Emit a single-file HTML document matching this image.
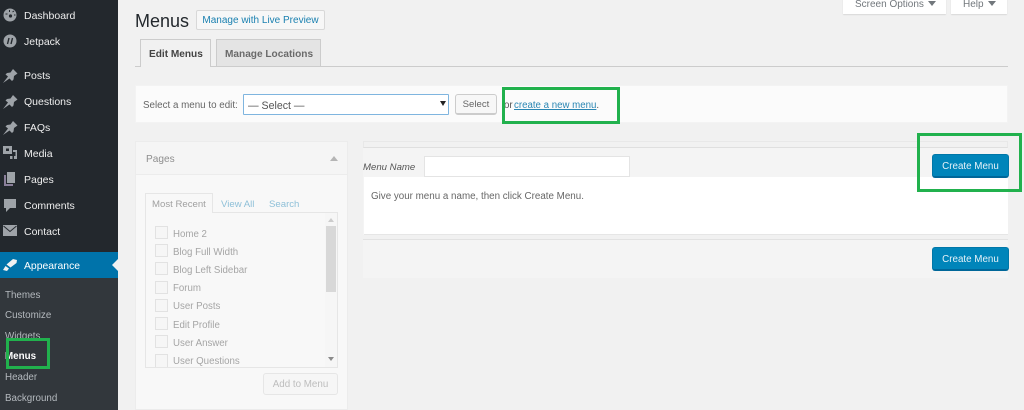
<!DOCTYPE html>
<html><head><meta charset="utf-8">
<style>
html,body{margin:0;padding:0;width:1024px;height:410px;overflow:hidden;background:#f1f1f1}
body{font-family:"Liberation Sans",sans-serif;font-size:10px;color:#555}
#w{position:absolute;left:0;top:0;width:1024px;height:410px;overflow:hidden;filter:blur(.35px)}
.a{position:absolute;box-sizing:border-box}
.t{position:absolute;white-space:nowrap;line-height:14px;margin-top:1px}
.m{color:#eee;font-size:10.500px;left:24px}
.s{color:#b4b9be;font-size:9.800px;left:5px}
.g{position:absolute;box-sizing:border-box;border:3px solid #21b14d}
.btn{position:absolute;box-sizing:border-box;background:#0085ba;border:1px solid #0077a8;border-bottom:2px solid #006799;border-radius:3px;color:#e6f2f8;font-size:9.800px;text-align:center;line-height:24px}
.cb{position:absolute;left:155px;width:13px;height:13px;border:1px solid #e2e2e2;background:#f6f6f6;box-sizing:border-box}
.pl{position:absolute;left:173px;color:#a5a5a5;font-size:9.700px;line-height:14px;white-space:nowrap;margin-top:2px}
svg{position:absolute}
</style></head><body><div id="w">
<div class="a" style="left:0;top:0;width:118px;height:410px;background:#23282d"></div>
<div class="a" style="left:0;top:252px;width:118px;height:26px;background:#0073aa"></div>
<div class="a" style="left:0;top:278px;width:118px;height:132px;background:#32373c"></div>
<svg style="left:112px;top:259px" width="6" height="12"><path d="M6 0L0 6L6 12Z" fill="#f1f1f1"/></svg>

<svg style="left:3px;top:8px" width="14" height="14"><circle cx="7" cy="7" r="6.500" fill="#9ea3a8"/><circle cx="7.500" cy="8" r="1.600" fill="#23282d"/><path d="M2.500 6h2M9.500 4l1.500-1M6.500 2v2M11 7h1.500" stroke="#23282d"/></svg>
<svg style="left:3px;top:34px" width="14" height="14"><circle cx="7" cy="7" r="6.500" fill="#9ea3a8"/><path d="M6 4L4.500 10M9.500 4L8 10" stroke="#23282d" stroke-width="1.400"/></svg>
<svg style="left:3px;top:68px" width="15" height="15"><path d="M0 15L5 8.500L2.500 6.500L4 5L7.500 4.500L10 1L14.500 5.500L11 8L10.500 11.500L9 13L6.500 10.500Z" fill="#9ea3a8"/></svg>
<svg style="left:3px;top:94px" width="15" height="15"><path d="M0 15L5 8.500L2.500 6.500L4 5L7.500 4.500L10 1L14.500 5.500L11 8L10.500 11.500L9 13L6.500 10.500Z" fill="#9ea3a8"/></svg>
<svg style="left:3px;top:120px" width="15" height="15"><path d="M0 15L5 8.500L2.500 6.500L4 5L7.500 4.500L10 1L14.500 5.500L11 8L10.500 11.500L9 13L6.500 10.500Z" fill="#9ea3a8"/></svg>
<svg style="left:3px;top:146px" width="14" height="14"><path d="M0 0H9V8H0ZM3 2.500V5H6V2.500Z" fill-rule="evenodd" fill="#9ea3a8"/><path d="M10 4H14V13H11V10H12.500V6H10ZM7 10H9.500V13H7Z" fill="#9ea3a8"/></svg>
<svg style="left:4px;top:172px" width="12" height="14"><path d="M0 3H2V12H9V14H0Z" fill="#8a7f9a"/><path d="M3 0H11V11H3Z" fill="#9ea3a8"/></svg>
<svg style="left:3px;top:199px" width="14" height="14"><path d="M1 0H13V9H7L3 13V9H1Z" fill="#9ea3a8"/></svg>
<svg style="left:3px;top:225px" width="14" height="12"><path d="M0 0H14V11H0Z" fill="#9ea3a8"/><path d="M0.500 1L7 6.500L13.500 1" stroke="#23282d" fill="none"/></svg>
<svg style="left:3px;top:258px" width="14" height="14"><path d="M0 12L2.500 8L6 10.500L4 13ZM3.500 6.500L10 1L14 2L13.500 5L7.500 9.500Z" fill="#f1f1f1"/></svg>

<div class="t m" style="top:8px">Dashboard</div>
<div class="t m" style="top:34px">Jetpack</div>
<div class="t m" style="top:68px">Posts</div>
<div class="t m" style="top:94px">Questions</div>
<div class="t m" style="top:120px">FAQs</div>
<div class="t m" style="top:146px">Media</div>
<div class="t m" style="top:172px">Pages</div>
<div class="t m" style="top:198px">Comments</div>
<div class="t m" style="top:224px">Contact</div>
<div class="t m" style="top:259px;color:#fff;font-size:10.400px">Appearance</div>
<div class="t s" style="top:288px">Themes</div>
<div class="t s" style="top:308px">Customize</div>
<div class="t s" style="top:329px">Widgets</div>
<div class="t s" style="top:349px;color:#fff;font-weight:bold">Menus</div>
<div class="t s" style="top:370px">Header</div>
<div class="t s" style="top:391px">Background</div>
<div class="g" style="left:6px;top:338px;width:44px;height:31px"></div>

<!-- Top tabs -->
<div class="a" style="left:843px;top:-5px;width:103px;height:19px;background:#fff;box-shadow:0 1px 1px rgba(0,0,0,.1)"></div>
<div class="a" style="left:951px;top:-5px;width:56px;height:19px;background:#fff;box-shadow:0 1px 1px rgba(0,0,0,.1)"></div>
<div class="t" style="left:855px;top:-3px;font-size:10px;color:#72777c">Screen Options</div>
<div class="t" style="left:963px;top:-3px;font-size:10px;color:#72777c">Help</div>
<svg style="left:928px;top:1px" width="8" height="5"><path d="M0 0H8L4 5Z" fill="#72777c"/></svg>
<svg style="left:988px;top:1px" width="8" height="5"><path d="M0 0H8L4 5Z" fill="#72777c"/></svg>

<!-- Title -->
<div class="t" style="left:135px;top:8px;font-size:18px;line-height:24px;color:#23282d">Menus</div>
<div class="a" style="left:196px;top:10px;width:129px;height:20px;background:#f7f7f7;border:1px solid #d8d8d8;border-radius:2px;color:#1a80b0;font-size:10px;line-height:19px;text-align:center">Manage with Live Preview</div>

<!-- Nav tabs -->
<div class="a" style="left:135px;top:66px;width:873px;height:1px;background:#ccc"></div>
<div class="a" style="left:140px;top:39px;width:71px;height:28px;background:#f1f1f1;border:1px solid #ccc;border-bottom:none"></div>
<div class="a" style="left:216px;top:39px;width:105px;height:27px;background:#e4e4e4;border:1px solid #ccc;border-bottom:none"></div>
<div class="t" style="left:149px;top:47px;font-size:10.100px;font-weight:bold;color:#444">Edit Menus</div>
<div class="t" style="left:225px;top:47px;font-size:10.100px;font-weight:bold;color:#6a6a6a">Manage Locations</div>

<!-- Select bar -->
<div class="a" style="left:135px;top:85px;width:873px;height:38px;background:#fbfbfb;border:1px solid #f3f3f3"></div>
<div class="t" style="left:143px;top:98px;font-size:9.800px;color:#666">Select a menu to edit:</div>
<div class="a" style="left:243px;top:94px;width:206px;height:21px;background:#fff;border:1px solid #7fb5df;border-radius:1px"></div>
<div class="t" style="left:248px;top:98px;font-size:10.600px;color:#555">— Select —</div>
<svg style="left:440px;top:101px" width="6" height="5"><path d="M0 0H6L3 5Z" fill="#222"/></svg>
<div class="a" style="left:455px;top:94px;width:42px;height:21px;background:#f7f7f7;border:1px solid #ccc;border-bottom:2px solid #ccc;border-radius:3px;text-align:center;line-height:20px;font-size:9.600px;color:#666">Select</div>
<div class="t" style="left:504px;top:98px;font-size:9.700px;color:#555">or</div>
<div class="t" style="left:514px;top:98px;font-size:9.700px;color:#2a86b3;text-decoration:underline">create a new menu<span style="color:#555;display:inline-block;text-decoration:none">.</span></div>
<div class="g" style="left:502px;top:87px;width:118px;height:37px"></div>

<!-- Pages box -->
<div class="a" style="left:135px;top:141px;width:213px;height:269px;background:#f8f8f8;border:1px solid #ececec"></div>
<div class="a" style="left:136px;top:142px;width:211px;height:33px;background:#f5f5f5;border-bottom:1px solid #ececec"></div>
<div class="t" style="left:146px;top:152px;font-size:10.100px;color:#8e8e8e">Pages</div>
<svg style="left:330px;top:156px" width="8" height="5"><path d="M0 5H8L4 0Z" fill="#b5b5b5"/></svg>
<div class="a" style="left:145px;top:212px;width:193px;height:156px;border:1px solid #e6e6e6;background:#f8f8f8"></div>
<div class="a" style="left:145px;top:193px;width:68px;height:20px;background:#f8f8f8;border:1px solid #e6e6e6;border-bottom:none"></div>
<div class="t" style="left:152px;top:197px;font-size:9.600px;color:#a0a0a0">Most Recent</div>
<div class="t" style="left:221px;top:197px;font-size:9.600px;color:#8fc0d8">View All</div>
<div class="t" style="left:269px;top:197px;font-size:9.600px;color:#8fc0d8">Search</div>
<div class="a" style="left:325px;top:213px;width:12px;height:154px;background:#f6f6f6"></div>
<div class="a" style="left:326px;top:226px;width:10px;height:66px;background:#d8d8d8"></div>
<svg style="left:328px;top:218px" width="6" height="4"><path d="M0 4H6L3 0Z" fill="#ccc"/></svg>
<svg style="left:328px;top:357px" width="6" height="4"><path d="M0 0H6L3 4Z" fill="#8a8a8a"/></svg>

<div class="cb" style="top:226px"></div><div class="pl" style="top:226px">Home 2</div>
<div class="cb" style="top:244px"></div><div class="pl" style="top:244px">Blog Full Width</div>
<div class="cb" style="top:262px"></div><div class="pl" style="top:262px">Blog Left Sidebar</div>
<div class="cb" style="top:281px"></div><div class="pl" style="top:280px">Forum</div>
<div class="cb" style="top:299px"></div><div class="pl" style="top:298px">User Posts</div>
<div class="cb" style="top:317px"></div><div class="pl" style="top:317px">Edit Profile</div>
<div class="cb" style="top:335px"></div><div class="pl" style="top:335px">User Answer</div>
<div class="cb" style="top:354px;height:13px;border-bottom:none"></div><div class="pl" style="top:353px">User Questions</div>

<div class="a" style="left:263px;top:373px;width:75px;height:22px;background:#f6f6f6;border:1px solid #e6e6e6;border-radius:3px;color:#bdbdbd;font-size:9.800px;line-height:22px;text-align:center">Add to Menu</div>

<!-- Right panel -->
<div class="a" style="left:363px;top:141px;width:645px;height:137px;background:#f4f4f4"></div>
<div class="a" style="left:363px;top:141px;width:645px;height:7px;background:#f1f1f1;border:1px solid #e8e8e8;border-bottom:1px solid #dfdfdf"></div>
<div class="t" style="left:363px;top:160px;font-size:9.600px;font-style:italic;color:#555">Menu Name</div>
<div class="a" style="left:424px;top:156px;width:206px;height:21px;background:#fff;border:1px solid #e4e4e4"></div>
<div class="a" style="left:364px;top:177px;width:644px;height:58px;background:#fff;border-bottom:1px solid #e6e6e6"></div>
<div class="t" style="left:371px;top:189px;font-size:9.800px;color:#666">Give your menu a name, then click Create Menu.</div>
<div class="a" style="left:363px;top:235px;width:645px;height:5px;background:#f1f1f1;border-bottom:1px solid #e2e2e2"></div>
<div class="btn" style="left:932px;top:154px;width:77px;height:24px">Create Menu</div>
<div class="btn" style="left:932px;top:247px;width:77px;height:24px">Create Menu</div>
<div class="g" style="left:917px;top:133px;width:105px;height:59px"></div>
</div></body></html>
